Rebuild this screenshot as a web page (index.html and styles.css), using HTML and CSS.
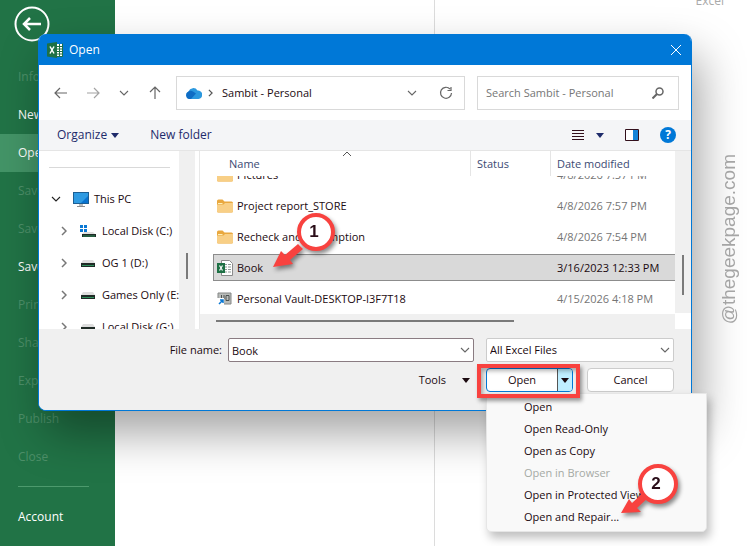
FILE: index.html
```html
<!DOCTYPE html>
<html lang="en">

<head>
    <meta charset="UTF-8">
    <meta name="viewport" content="width=device-width, initial-scale=1.0">
    <title>Excel - Open</title>
    <link rel="stylesheet" href="styles.css">
</head>

<body>
    <svg class="sprites" aria-hidden="true">
        <symbol id="folder" viewBox="0 0 16 14">
            <path d="M0 2q0-1.500 1.500-1.500h4l2 2h7q1.500 0 1.500 1.500v8q0 1.500-1.500 1.500h-13q-1.500 0-1.500-1.500z" fill="#e9a83f"/>
            <path d="M0 5.500h6.500l1.500-1.500h8v8q0 1.500-1.500 1.500h-13q-1.500 0-1.500-1.500z" fill="#f8cf86"/>
            <path d="M1 4.500h4.500" stroke="#fff0b8"/>
        </symbol>
        <symbol id="down" viewBox="0 0 10 6">
            <path d="M1 1l4 4 4-4" fill="none" stroke="currentColor" stroke-width="1.100"/>
        </symbol>
        <symbol id="caret" viewBox="0 0 8 5">
            <path d="M0 0h8l-4 5z" fill="currentColor"/>
        </symbol>
        <symbol id="right" viewBox="0 0 6 10">
            <path d="M1 1l4 4-4 4" fill="none" stroke="currentColor" stroke-width="1.500"/>
        </symbol>
        <symbol id="drive" viewBox="0 0 14 7">
            <path d="M2 0h10l2 3h-14z" fill="#dedede"/>
            <path d="M0 3h14v4h-14z" fill="#1f2b26"/>
            <path d="M1 5.500h12" stroke="#2f8f5b"/>
        </symbol>
    </svg>

    <aside class="backstage">
        <button class="back" aria-label="Back">
            <svg width="36" height="36" viewBox="0 0 36 36" fill="none" stroke="#fff" stroke-width="2">
                <circle cx="18" cy="18" r="16.500"/>
                <path d="M27 18H10M16 12l-6 6 6 6" stroke-width="2.500"/>
            </svg>
        </button>
        <nav class="backstage-nav">
            <a href="#" class="off">Info</a>
            <a href="#">New</a>
            <a href="#" class="current">Open</a>
            <a href="#" class="off">Save</a>
            <a href="#" class="off">Save As</a>
            <a href="#">Save as</a>
            <a href="#" class="off">Print</a>
            <a href="#" class="off">Share</a>
            <a href="#" class="off">Export</a>
            <a href="#" class="off">Publish</a>
            <a href="#" class="off">Close</a>
            <hr>
            <a href="#">Account</a>
        </nav>
    </aside>

    <main class="workspace">
        <div class="recent"></div>
        <div class="details"><span class="app-name">Excel</span></div>
    </main>

    <p class="watermark">@thegeekpage.com</p>

    <section class="dialog" role="dialog" aria-labelledby="dialogTitle">
        <header class="titlebar">
            <svg width="16" height="16" viewBox="0 0 16 16">
                <path d="M9 2h7v12H9z" fill="#fff"/>
                <path d="M9.500 4.500h6M9.500 7h6M9.500 9.500h6M9.500 12h6M12.500 2v12" stroke="#1e7145"/>
                <path d="M15.500 1.500v13H9" stroke="#1e7145" fill="none"/>
                <path d="M0 1.500L10 0v16L0 14.500z" fill="#1e7145"/>
                <path d="M3 4.500l4 7M7 4.500l-4 7" stroke="#fff" stroke-width="1.500"/>
            </svg>
            <h1 id="dialogTitle">Open</h1>
            <button class="close" aria-label="Close">
                <svg width="12" height="12" viewBox="0 0 12 12" stroke="#fff"><path d="M1 1l10 10M11 1L1 11"/></svg>
            </button>
        </header>

        <div class="navbar">
            <div class="arrows">
                <button aria-label="Back"><svg width="13" height="12" viewBox="0 0 13 12"><path d="M13 6H1M6 1L1 6l5 5"/></svg></button>
                <button aria-label="Forward" class="faded"><svg width="13" height="12" viewBox="0 0 13 12"><path d="M0 6h12M7 1l5 5-5 5"/></svg></button>
                <button aria-label="Recent locations"><svg width="10" height="6"><use href="#down"/></svg></button>
                <button aria-label="Up"><svg width="12" height="13" viewBox="0 0 12 13"><path d="M6 13V1M1 6l5-5 5 5"/></svg></button>
            </div>
            <div class="address">
                <svg width="17" height="12" viewBox="0 0 17 12">
                    <path d="M4 12a4 4 0 0 1-.5-7.500A5 5 0 0 1 12.500 3.500A4 4 0 0 1 13.500 12z" fill="#2b98de"/>
                    <path d="M4 12a4 4 0 0 1-.5-7.500q2-1.500 4.500 0l3 2-5 5.500z" fill="#0f6cc4"/>
                </svg>
                <svg class="crumb" width="5" height="8"><use href="#right"/></svg>
                <span class="place">Sambit - Personal</span>
                <button aria-label="Previous locations"><svg width="10" height="6"><use href="#down"/></svg></button>
                <button aria-label="Refresh"><svg width="14" height="14" viewBox="0 0 14 14"><path d="M11 3a5.500 5.500 0 1 0 1.500 4M12 1v3.500H8.500"/></svg></button>
            </div>
            <div class="search">
                <input type="text" aria-label="Search" placeholder="Search Sambit - Personal">
                <svg width="12" height="12" viewBox="0 0 12 12" fill="none" stroke="#666" stroke-width="1.500"><circle cx="7.500" cy="4.500" r="3.500"/><path d="M5 7L0.500 11.500" stroke-width="2"/></svg>
            </div>
        </div>

        <div class="toolbar">
            <button>Organize <svg width="8" height="5"><use href="#caret"/></svg></button>
            <button>New folder</button>
            <div class="views">
                <button aria-label="Change view"><svg width="12" height="12" viewBox="0 0 12 12" stroke="#33101c"><path d="M0 1.500h12M0 4.500h12M0 7.500h12M0 10.500h12"/></svg></button>
                <button aria-label="More view options"><svg width="8" height="5"><use href="#caret"/></svg></button>
                <button aria-label="Preview pane"><svg width="14" height="12" viewBox="0 0 14 12"><path d="M.5.500h13v11H.5z" fill="#fff" stroke="#33101c"/><path d="M8 1h5v10H8z" fill="#1483d8"/></svg></button>
                <button class="help" aria-label="Help">?</button>
            </div>
        </div>

        <div class="browser">
            <div class="tree">
                <hr>
                <div class="node root">
                    <svg class="twist" width="10" height="6"><use href="#down"/></svg>
                    <svg width="16" height="15" viewBox="0 0 16 15"><path d="M6 12h4v2H6z" fill="#bbb"/><path d="M4 14.500h8" stroke="#8d8d8d"/><path d="M0 0h16v12H0z" fill="#1c5f94"/><path d="M1 1h14v10H1z" fill="#2f9be2"/><path d="M15 4v7H8z" fill="#0a73cf"/></svg>
                    <span>This PC</span>
                </div>
                <div class="node">
                    <svg class="twist" width="6" height="10"><use href="#right"/></svg>
                    <svg width="16" height="13" viewBox="0 0 16 13"><path d="M4 7h9l2 2H2z" fill="#dedede"/><path d="M2 9h14v3H2z" fill="#1f2b26"/><path d="M3 11h12" stroke="#2f8f5b"/><path d="M0 0h3v3H0zM4 0h3v3H4zM0 4h3v3H0zM4 4h3v3H4z" fill="#0a78d4"/></svg>
                    <span>Local Disk (C:)</span>
                </div>
                <div class="node">
                    <svg class="twist" width="6" height="10"><use href="#right"/></svg>
                    <svg width="16" height="7"><use href="#drive"/></svg>
                    <span>OG 1 (D:)</span>
                </div>
                <div class="node">
                    <svg class="twist" width="6" height="10"><use href="#right"/></svg>
                    <svg width="16" height="7"><use href="#drive"/></svg>
                    <span>Games Only (E:)</span>
                </div>
                <div class="node">
                    <svg class="twist" width="6" height="10"><use href="#right"/></svg>
                    <svg width="16" height="7"><use href="#drive"/></svg>
                    <span>Local Disk (G:)</span>
                </div>
            </div>
            <div class="scroll tree-scroll"><i></i></div>

            <div class="list">
                <div class="columns">
                    <span>Name</span>
                    <svg class="sort" width="10" height="6" viewBox="0 0 10 6"><path d="M1 5l4-4 4 4" fill="none" stroke="#555"/></svg>
                    <span>Status</span>
                    <span>Date modified</span>
                </div>
                <div class="files">
                    <div class="file">
                        <span class="name"><svg width="16" height="14"><use href="#folder"/></svg>Pictures</span>
                        <span class="date">4/8/2026 7:57 PM</span>
                    </div>
                    <div class="file">
                        <span class="name"><svg width="16" height="14"><use href="#folder"/></svg>Project report_STORE</span>
                        <span class="date">4/8/2026 7:57 PM</span>
                    </div>
                    <div class="file">
                        <span class="name"><svg width="16" height="14"><use href="#folder"/></svg>Recheck and redemption</span>
                        <span class="date">4/8/2026 7:54 PM</span>
                    </div>
                    <div class="file selected">
                        <span class="name">
                            <svg width="16" height="16" viewBox="0 0 16 16">
                                <path d="M4.500.500h8l3 3v12h-11z" fill="#fff" stroke="#8b8b8b"/>
                                <path d="M8 4.500h2M11 4.500h3M8 7h2M11 7h3M8 9.500h2M11 9.500h3M8 12h2M11 12h3" stroke="#8d9b94"/>
                                <path d="M0 3h8v10H0z" fill="#1e7145"/>
                                <path d="M2.500 5.500l3 5M5.500 5.500l-3 5" stroke="#fff" stroke-width="1.200"/>
                            </svg>Book</span>
                        <span class="date">3/16/2023 12:33 PM</span>
                    </div>
                    <div class="file">
                        <span class="name">
                            <svg width="16" height="14" viewBox="0 0 16 14">
                                <path d="M1 1h13v11H1z" fill="#b9bcba" stroke="#858786"/>
                                <path d="M4.500 3v6M7 3v4M9 3.500h3v5H9z" stroke="#4c514f" fill="none"/>
                                <path d="M0 6h7v8H0z" fill="#fff"/>
                                <path d="M2 12l4-4M3 8h3v3" stroke="#0a78d4" stroke-width="1.500" fill="none"/>
                            </svg>Personal Vault-DESKTOP-I3F7T18</span>
                        <span class="date">4/15/2026 4:18 PM</span>
                    </div>
                </div>
                <div class="hscroll"><i></i></div>
            </div>
            <div class="scroll list-scroll"><i></i></div>
        </div>

        <form class="footer" onsubmit="event.preventDefault();">
            <label for="fileName">File name:</label>
            <div class="field">
                <input type="text" id="fileName" value="Book">
                <svg width="10" height="6"><use href="#down"/></svg>
            </div>
            <div class="field type">
                <select aria-label="File type">
                    <option>All Excel Files</option>
                </select>
                <svg width="10" height="6"><use href="#down"/></svg>
            </div>
            <button type="button" class="tools">Tools <svg width="8" height="5"><use href="#caret"/></svg></button>
            <div class="actions">
                <div class="split">
                    <button type="submit" class="open">Open</button>
                    <button type="button" class="more" aria-label="More open options"><svg width="10" height="5"><use href="#caret"/></svg></button>
                    <div class="menu" role="menu">
                        <button type="button" role="menuitem">Open</button>
                        <button type="button" role="menuitem">Open Read-Only</button>
                        <button type="button" role="menuitem">Open as Copy</button>
                        <button type="button" role="menuitem" disabled>Open in Browser</button>
                        <button type="button" role="menuitem">Open in Protected View</button>
                        <button type="button" role="menuitem">Open and Repair...</button>
                        <svg class="callout step-two" width="64" height="56" viewBox="0 0 64 56">
                            <path d="M3 50l8-14 3 4 12-11 5 5-12 11 4 4z" fill="#f8423f"/>
                            <circle cx="40" cy="21" r="18" fill="#fff" stroke="#f8423f" stroke-width="4"/>
                            <text x="38" y="26">2</text>
                        </svg>
                    </div>
                    <div class="highlight"></div>
                </div>
                <button type="button" class="cancel">Cancel</button>
            </div>
        </form>

        <svg class="callout step-one" width="66" height="60" viewBox="0 0 66 60">
            <path d="M3 56l8-16 4 4 13-11 5 5-13 11 3 4z" fill="#f8423f"/>
            <circle cx="46" cy="21" r="17" fill="#fff" stroke="#f8423f" stroke-width="4"/>
            <text x="44" y="26">1</text>
        </svg>
    </section>
</body>

</html>
```
FILE: styles.css
```css
* {
    box-sizing: border-box;
}

body {
    margin: 0;
    position: relative;
    display: flex;
    min-height: 100vh;
    overflow: hidden;
    background: #fff;
    color: #1b0a10;
    font-family: "Open Sans", "Noto Sans", sans-serif;
    font-size: 12px;
    line-height: 16px;
}

button, input, select {
    margin: 0;
    padding: 0;
    border: none;
    background: none;
    color: inherit;
    font: inherit;
}

svg {
    flex: none;
    display: block;
}

.sprites {
    position: absolute;
    width: 0;
    height: 0;
}

/* backstage */

.backstage {
    flex: none;
    width: 115px;
    background: #217346;
    color: #fff;
}

.back {
    display: block;
    margin: 6px 0 16px 14px;
}

.backstage-nav a {
    display: block;
    padding: 11px 18px;
    color: #fff;
    text-decoration: none;
    white-space: nowrap;
}

.backstage-nav .off {
    color: #4d9069;
}

.backstage-nav .current {
    background: #439467;
}

.backstage-nav hr {
    margin: 10px 26px 11px 18px;
    border: none;
    border-top: 1px solid #4d9a6d;
}

.workspace {
    flex: 1;
    display: flex;
}

.recent {
    flex: 319;
    border-right: 1px solid #dcdcdc;
}

.details {
    flex: 312;
    text-align: right;
}

.app-name {
    display: block;
    margin: -7px 23px 0 0;
    color: #aaa;
}

.watermark {
    position: absolute;
    top: 154px;
    right: 8px;
    margin: 0;
    z-index: 2;
    color: #a5a5a5;
    font: 19px/20px "Liberation Sans", Arial, sans-serif;
    writing-mode: vertical-rl;
    transform: rotate(180deg);
}

/* dialog */

.dialog {
    position: absolute;
    top: 34px;
    left: 38px;
    right: 55px;
    border: 1px solid #0078d7;
    border-top: none;
    border-radius: 8px;
    background: #fff;
    box-shadow: 8px 22px 45px rgba(0, 0, 0, .36);
    font-size: 11px;
}

.titlebar {
    display: flex;
    align-items: center;
    gap: 6px;
    height: 31px;
    padding: 0 9px 0 8px;
    border-radius: 7px 7px 0 0;
    background: #0078d7;
    color: #fff;
}

.titlebar h1 {
    flex: 1;
    margin: 0;
    font-size: 12px;
    font-weight: normal;
}

.navbar {
    display: flex;
    align-items: center;
    gap: 12px;
    height: 55px;
    padding: 0 12px 0 15px;
}

.arrows {
    display: flex;
    justify-content: space-between;
    align-items: center;
    width: 107px;
    margin-right: 3px;
    color: #666;
}

.arrows path, .address button path {
    fill: none;
    stroke: #666;
    stroke-width: 1.2;
}

.faded {
    opacity: .6;
}

.address, .search {
    display: flex;
    align-items: center;
    height: 34px;
    border: 1px solid #d9d9d9;
}

.address {
    flex: 268;
    padding: 0 11px 0 8px;
}

.address button {
    margin-left: 22px;
    color: #666;
}

.crumb {
    margin: 0 9px 0 6px;
    color: #555;
}

.place {
    flex: 1;
}

.search {
    flex: 178;
    padding: 0 14px 0 8px;
}

.search input {
    flex: 1;
    min-width: 0;
    outline: none;
}

.search input::placeholder {
    color: #767676;
    opacity: 1;
}

.toolbar {
    display: flex;
    align-items: center;
    gap: 31px;
    height: 31px;
    padding: 0 15px 0 18px;
    border-bottom: 1px solid #e5e5e5;
    background: #f4f5f7;
    color: #1e2b6b;
    font-size: 12px;
}

.toolbar button {
    display: flex;
    align-items: center;
    gap: 4px;
}

.views {
    display: flex;
    align-items: center;
    gap: 12px;
    margin-left: auto;
}

.views button:nth-child(3) {
    margin: 0 9px;
}

.toolbar .help {
    justify-content: center;
    width: 16px;
    height: 16px;
    border-radius: 50%;
    background: #0078d7;
    color: #fff;
    font-weight: bold;
}

/* folder tree and file list */

.browser {
    display: flex;
    height: 178px;
}

.tree {
    flex: none;
    width: 140px;
    overflow: hidden;
}

.tree hr {
    margin: 16px 9px 15px 10px;
    border: none;
    border-top: 1px solid #d9d9d9;
}

.node {
    display: flex;
    align-items: center;
    gap: 6px;
    height: 32px;
    padding-left: 22px;
    white-space: nowrap;
}

.node .twist {
    margin-right: 7px;
    color: #777;
}

.node.root {
    gap: 5px;
    padding-left: 12px;
}

.node.root .twist {
    color: #222;
}

.scroll {
    flex: none;
    width: 16px;
    background: #f0f0f0;
}

.scroll i {
    display: block;
    width: 2px;
    margin: 0 auto;
    background: #7a7a7a;
}

.tree-scroll i {
    height: 26px;
    margin-top: 102px;
}

.list-scroll {
    margin-bottom: 16px;
}

.list-scroll i {
    height: 40px;
    margin-top: 104px;
}

.list {
    flex: 1;
    display: flex;
    flex-direction: column;
    min-width: 0;
    margin-left: 4px;
    border-left: 1px solid #e8e8e8;
}

.columns, .file {
    display: grid;
    grid-template-columns: 1fr 80px 125px;
}

.columns {
    position: relative;
    flex: none;
    height: 25px;
    color: #3c4a73;
}

.columns span {
    padding: 5px 0 4px 6px;
    border-left: 1px solid #e5e5e5;
}

.columns span:first-child {
    padding-left: 29px;
    border-left: none;
}

.sort {
    position: absolute;
    top: 0;
    left: 142px;
}

.files {
    flex: 1;
    display: flex;
    flex-direction: column;
    justify-content: flex-end;
    min-height: 0;
    padding-left: 13px;
    overflow: hidden;
}

.file {
    flex: none;
    align-items: center;
    height: 27px;
    margin: 2px 0;
    border: 1px solid transparent;
    border-right: none;
}

.selected {
    border-color: #8c8c8c;
    background: #d9d9d9;
}

.name {
    display: flex;
    align-items: center;
    gap: 4px;
    padding-left: 3px;
}

.date {
    grid-column: 3;
    padding-left: 7px;
    color: #757575;
}

.selected .date {
    color: inherit;
}

.hscroll {
    flex: none;
    height: 15px;
    padding: 6px 0 0 16px;
    background: #f0f0f0;
}

.hscroll i {
    display: block;
    width: 65%;
    height: 2px;
    background: #7a7a7a;
}

/* file name, type and buttons */

.footer {
    display: grid;
    grid-template-columns: 183px 240fr 188fr;
    align-items: center;
    gap: 6px 12px;
    padding: 9px 17px 18px 0;
    border-radius: 0 0 7px 7px;
    background: #f0f0f0;
}

.footer label {
    text-align: right;
}

.field {
    position: relative;
    margin-left: -6px;
    height: 24px;
}

.field.type {
    margin-left: 0;
}

.field input, .field select {
    width: 100%;
    height: 24px;
    padding: 0 3px;
    border: 1px solid #8a7c82;
    border-radius: 2px;
    background: #fff;
    outline: none;
}

.field select {
    appearance: none;
    border-color: #ccc;
}

.field svg {
    position: absolute;
    top: 9px;
    right: 4px;
    color: #666;
    pointer-events: none;
}

.tools {
    grid-column: 2;
    justify-self: end;
    display: flex;
    align-items: center;
    gap: 16px;
    margin-right: 4px;
}

.actions {
    display: flex;
    gap: 14px;
}

.split {
    position: relative;
    flex: 1;
    display: flex;
    height: 24px;
    border: 1px solid #0078d7;
    border-radius: 4px;
    background: #fff;
}

.open {
    flex: 1;
}

.more {
    display: flex;
    align-items: center;
    justify-content: center;
    width: 15px;
    border-left: 1px solid #555;
    border-radius: 0 3px 3px 0;
    background: #bfeeff;
}

.cancel {
    flex: 1;
    height: 24px;
    border: 1px solid #ccc;
    border-radius: 4px;
    background: #fff;
}

.highlight {
    position: absolute;
    inset: -5px -8px -7px -10px;
    border: 4px solid #f8423f;
    box-shadow: 2px 3px 4px rgba(0, 0, 0, .4), inset 2px 3px 4px rgba(0, 0, 0, .3);
    pointer-events: none;
}

.menu {
    position: absolute;
    top: 24px;
    left: -1px;
    width: 221px;
    padding: 2px 0 3px;
    border: 1px solid #e6e6e6;
    border-radius: 0 0 5px 5px;
    background: #f9f9f9;
    box-shadow: 3px 6px 10px rgba(0, 0, 0, .25);
}

.menu button {
    display: block;
    width: 100%;
    height: 22px;
    padding-left: 37px;
    text-align: left;
}

.menu button:disabled {
    color: #a5aaa5;
}

/* numbered steps */

.callout {
    position: absolute;
    overflow: visible;
    filter: drop-shadow(2px 3px 2px rgba(0, 0, 0, .45));
}

.callout text {
    fill: #2a0d18;
    font: bold 17px "Liberation Sans", Arial, sans-serif;
    text-anchor: middle;
}

.step-one {
    top: 177px;
    left: 231px;
}

.step-two {
    top: 69px;
    left: 131px;
}
```
